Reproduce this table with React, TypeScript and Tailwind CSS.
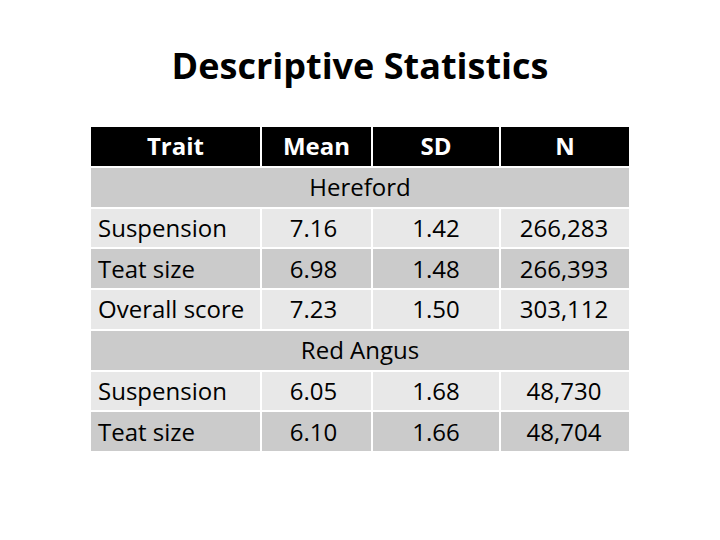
import React from "react";

type Row =
  | { kind: "group"; label: string; bg: string }
  | { kind: "data"; trait: string; mean: string; sd: string; n: string; bg: string };

const rows: Row[] = [
  { kind: "group", label: "Hereford", bg: "bg-[#cbcbcb]" },
  { kind: "data", trait: "Suspension", mean: "7.16", sd: "1.42", n: "266,283", bg: "bg-[#e8e8e8]" },
  { kind: "data", trait: "Teat size", mean: "6.98", sd: "1.48", n: "266,393", bg: "bg-[#cbcbcb]" },
  { kind: "data", trait: "Overall score", mean: "7.23", sd: "1.50", n: "303,112", bg: "bg-[#e8e8e8]" },
  { kind: "group", label: "Red Angus", bg: "bg-[#cbcbcb]" },
  { kind: "data", trait: "Suspension", mean: "6.05", sd: "1.68", n: "48,730", bg: "bg-[#e8e8e8]" },
  { kind: "data", trait: "Teat size", mean: "6.10", sd: "1.66", n: "48,704", bg: "bg-[#cbcbcb]" },
];

export default function App() {
  return (
    <div
      className="w-[720px] h-[540px] bg-white flex flex-col items-center text-black"
      style={{ fontFamily: "'Open Sans', sans-serif" }}
    >
      <h1 className="mt-[42px] text-[36px] leading-[48px] font-bold">Descriptive Statistics</h1>
      <div className="mt-[37px] grid grid-cols-[169px_109px_126px_128px] auto-rows-[38.75px] gap-[2px] bg-white text-[24px] leading-none">
        <div className="bg-black text-white font-bold flex items-center justify-center">Trait</div>
        <div className="bg-black text-white font-bold flex items-center justify-center">Mean</div>
        <div className="bg-black text-white font-bold flex items-center justify-center">SD</div>
        <div className="bg-black text-white font-bold flex items-center justify-center">N</div>
        {rows.map((r, i) =>
          r.kind === "group" ? (
            <div key={i} className={`col-span-4 ${r.bg} flex items-center justify-center`}>
              {r.label}
            </div>
          ) : (
            <React.Fragment key={i}>
              <div className={`${r.bg} flex items-center pl-[7px]`}>{r.trait}</div>
              <div className={`${r.bg} flex items-center justify-center pr-[6px]`}>{r.mean}</div>
              <div className={`${r.bg} flex items-center justify-center`}>{r.sd}</div>
              <div className={`${r.bg} flex items-center justify-center pr-[2px]`}>{r.n}</div>
            </React.Fragment>
          )
        )}
      </div>
    </div>
  );
}
